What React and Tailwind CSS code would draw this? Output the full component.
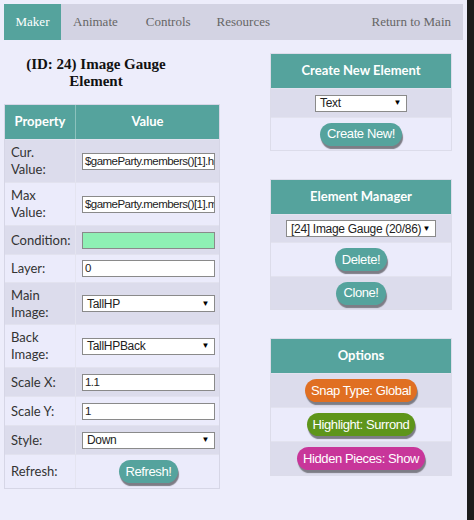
import React from 'react';

const teal = 'bg-[#55a39d]';

const Field = ({ value, tint }) => (
  <div
    className={`h-[17px] w-[133px] border border-[#8a8a8a] ${tint || 'bg-white'} px-[2px] text-[11.5px] tracking-[-0.55px] leading-[15px] text-[#222] whitespace-nowrap overflow-hidden font-['Liberation_Sans',Arial,sans-serif]`}
  >
    {value}
  </div>
);

const Select = ({ value, w = 'w-[133px]' }) => (
  <div
    className={`h-[17px] ${w} border border-[#8a8a8a] bg-white pl-[4px] pr-[5px] flex items-center justify-between text-[12px] tracking-[-0.3px] text-[#222] font-['Liberation_Sans',Arial,sans-serif]`}
  >
    <span className="whitespace-nowrap">{value}</span>
    <span className="text-[8px] text-black">▼</span>
  </div>
);

const Pill = ({ children, color = 'bg-[#55a39d]', px = 'px-[7px]' }) => (
  <button
    className={`${color} rounded-full ${px} h-[23px] text-white text-[13px] tracking-[-0.4px] font-['Liberation_Sans',Arial,sans-serif] shadow-[1px_3px_1px_#7d7d86] whitespace-nowrap`}
  >
    {children}
  </button>
);

const rows = [
  { label: ['Cur.', 'Value:'], h: 'h-[43px]', el: <Field value="$gameParty.members()[1].hp" /> },
  { label: ['Max', 'Value:'], h: 'h-[43px]', el: <Field value="$gameParty.members()[1].mhp" /> },
  { label: ['Condition:'], h: 'h-[29px]', el: <Field value="" tint="bg-[#8ef0b4]" /> },
  { label: ['Layer:'], h: 'h-[28px]', el: <Field value="0" /> },
  { label: ['Main', 'Image:'], h: 'h-[42px]', el: <Select value="TallHP" /> },
  { label: ['Back', 'Image:'], h: 'h-[43px]', el: <Select value="TallHPBack" /> },
  { label: ['Scale X:'], h: 'h-[29px]', el: <Field value="1.1" /> },
  { label: ['Scale Y:'], h: 'h-[29px]', el: <Field value="1" /> },
  { label: ['Style:'], h: 'h-[29px]', el: <Select value="Down" /> },
  { label: ['Refresh:'], h: 'h-[34px]', el: <div className="w-[133px] flex justify-center"><Pill>Refresh!</Pill></div> },
];

const Panel = ({ title, children }) => (
  <div className="w-[182px] border border-[#dcdcea]">
    <div className={`${teal} h-[34px] flex items-center justify-center text-white text-[13px] font-bold font-['Lato',sans-serif]`}>
      {title}
    </div>
    {children}
  </div>
);

const PanelRow = ({ dark, h = 'h-[34px]', children }) => (
  <div className={`${h} flex items-center justify-center border-t border-[#e2e2ef] ${dark ? 'bg-[#dcdcec]' : 'bg-[#ebebfb]'}`}>
    {children}
  </div>
);

export default function App() {
  return (
    <div className="flex min-h-[520px] w-[474px] bg-[#ededfb]">
      <div className="w-[467px] px-[4px] pt-[4px]">
        {/* top nav */}
        <div className="h-[36px] bg-[#d3d3e3] flex items-center text-[13px] text-[#666] font-['Liberation_Serif',serif]">
          <div className={`${teal} h-full w-[57px] flex items-center justify-center text-white`}>Maker</div>
          <span className="ml-[12px]">Animate</span>
          <span className="ml-[28px]">Controls</span>
          <span className="ml-[26px]">Resources</span>
          <span className="ml-auto mr-[12px]">Return to Main</span>
        </div>

        <div className="flex">
          {/* left column */}
          <div className="w-[216px]">
            <h1 className="mt-[16px] h-[48px] pl-[6px] pr-[38px] text-center text-[15px] leading-[17px] font-bold text-[#111] font-['Liberation_Serif',serif]">
              (ID: 24) Image Gauge Element
            </h1>
            <div className="border border-[#d6d6e6] font-['Lato',sans-serif]">
              <div className={`${teal} h-[34px] flex text-white text-[13px] font-bold`}>
                <div className="w-[71px] flex items-center justify-center border-r border-[#8cc2bd]">Property</div>
                <div className="flex-1 flex items-center justify-center">Value</div>
              </div>
              {rows.map((r, i) => (
                <div
                  key={i}
                  className={`${r.h} flex border-t border-[#e2e2ef] ${i % 2 === 0 ? 'bg-[#dcdcec]' : 'bg-[#ebebfb]'}`}
                >
                  <div className="w-[71px] pl-[6px] flex flex-col justify-center border-r border-[#e4e4f0] text-[13px] leading-[17px] text-[#333]">
                    {r.label.map((l) => (
                      <span key={l}>{l}</span>
                    ))}
                  </div>
                  <div className="flex-1 flex items-center pl-[6px]">{r.el}</div>
                </div>
              ))}
            </div>
          </div>

          {/* right column */}
          <div className="ml-[50px] pt-[13px] flex flex-col gap-[28px]">
            <Panel title="Create New Element">
              <PanelRow dark h="h-[29px]">
                <Select value="Text" w="w-[92px]" />
              </PanelRow>
              <PanelRow h="h-[33px]">
                <Pill>Create New!</Pill>
              </PanelRow>
            </Panel>

            <Panel title="Element Manager">
              <PanelRow dark h="h-[28px]">
                <Select value="[24] Image Gauge (20/86)" w="w-[150px]" />
              </PanelRow>
              <PanelRow>
                <Pill>Delete!</Pill>
              </PanelRow>
              <PanelRow dark h="h-[33px]">
                <Pill>Clone!</Pill>
              </PanelRow>
            </Panel>

            <Panel title="Options">
              <PanelRow dark>
                <Pill color="bg-[#e06f22]" px="px-[6px]">Snap Type: Global</Pill>
              </PanelRow>
              <PanelRow>
                <Pill color="bg-[#5e951b]" px="px-[6px]">Highlight: Surrond</Pill>
              </PanelRow>
              <PanelRow dark>
                <Pill color="bg-[#c8369a]" px="px-[6px]">Hidden Pieces: Show</Pill>
              </PanelRow>
            </Panel>
          </div>
        </div>
      </div>
      <div className="w-[7px] bg-[#1c1c1c]" />
    </div>
  );
}
